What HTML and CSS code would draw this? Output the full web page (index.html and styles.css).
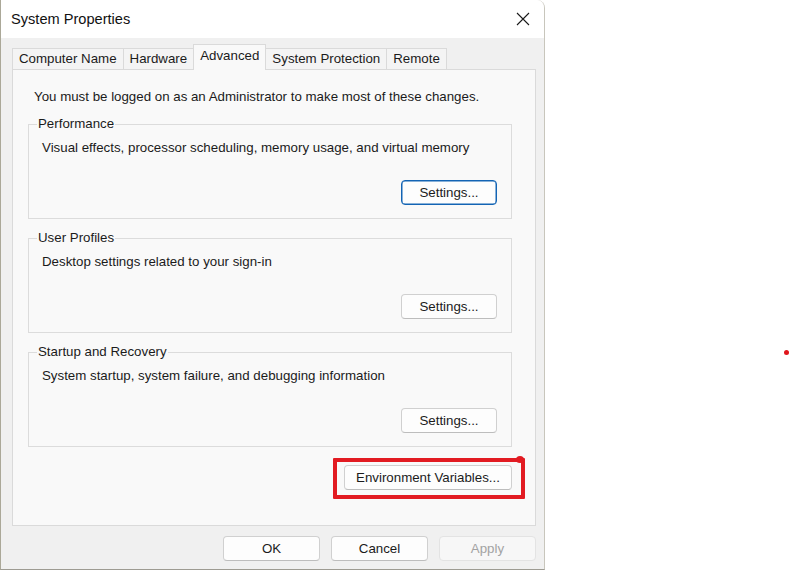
FILE: index.html
```html
<!DOCTYPE html>
<html>
<head>
<meta charset="utf-8">
<title>System Properties</title>
<link rel="stylesheet" href="styles.css">
</head>
<body>
<div class="window">
  <div class="titlebar">
    <span class="title">System Properties</span>
    <span class="close" aria-label="Close">
      <svg width="14" height="14" viewBox="0 0 14 14"><path d="M1 1 L13 13 M13 1 L1 13" stroke="#1a1a1a" stroke-width="1.1" fill="none"/></svg>
    </span>
  </div>
  <div class="body">
    <div class="tabs">
      <div class="tab">Computer Name</div>
      <div class="tab">Hardware</div>
      <div class="tab active">Advanced</div>
      <div class="tab">System Protection</div>
      <div class="tab">Remote</div>
    </div>
    <div class="panel">
      <p class="notice">You must be logged on as an Administrator to make most of these changes.</p>
      <fieldset class="group">
        <legend>Performance</legend>
        <p class="desc">Visual effects, processor scheduling, memory usage, and virtual memory</p>
        <div class="btnrow"><button class="btn focus">Settings...</button></div>
      </fieldset>
      <fieldset class="group">
        <legend>User Profiles</legend>
        <p class="desc">Desktop settings related to your sign-in</p>
        <div class="btnrow"><button class="btn">Settings...</button></div>
      </fieldset>
      <fieldset class="group">
        <legend>Startup and Recovery</legend>
        <p class="desc">System startup, system failure, and debugging information</p>
        <div class="btnrow"><button class="btn">Settings...</button></div>
      </fieldset>
      <div class="envrow">
        <div class="envwrap">
          <button class="btn env">Environment Variables...</button>
          <span class="highlight"></span>
          <span class="blob"></span>
        </div>
      </div>
    </div>
    <div class="footer">
      <button class="btn wide">OK</button>
      <button class="btn wide">Cancel</button>
      <button class="btn wide disabled">Apply</button>
    </div>
  </div>
</div>
<span class="dot"></span>
</body>
</html>
```
FILE: styles.css
```css
html, body {
  margin: 0;
  padding: 0;
  background: #ffffff;
  width: 789px;
  height: 572px;
  overflow: hidden;
  position: relative;
  font-family: "Liberation Sans", Arial, sans-serif;
  color: #1b1b1b;
}

.window {
  width: 545px;
  height: 570px;
  border-left: 1px solid #aba898;
  border-right: 1px solid #c8c6bc;
  border-bottom: 1px solid #9d9b92;
  border-top-right-radius: 8px;
  background: #f0f0f0;
  display: flex;
  flex-direction: column;
  overflow: hidden;
  box-sizing: border-box;
}

.titlebar {
  height: 38px;
  background: #ffffff;
  display: flex;
  align-items: center;
  justify-content: space-between;
  padding: 0 14px 0 10px;
  flex: none;
}

.title {
  font-size: 14.6px;
  color: #111;
}

.close {
  display: flex;
  width: 14px;
  height: 14px;
}

.body {
  flex: 1;
  display: flex;
  flex-direction: column;
  padding: 7px 0 0 11px;
}

.tabs {
  display: flex;
  align-items: flex-end;
  height: 24px;
  position: relative;
  z-index: 1;
}

.tab {
  height: 20px;
  line-height: 20px;
  padding: 0 6px;
  font-size: 13.3px;
  background: #f4f4f4;
  border: 1px solid #dadada;
  border-bottom: none;
  margin-right: -1px;
  color: #1b1b1b;
}

.tab.active {
  height: 25px;
  line-height: 22px;
  background: #f9f9f9;
  margin-bottom: -1px;
  padding: 0 6px;
  position: relative;
  z-index: 2;
}

.panel {
  border: 1px solid #dadada;
  background: #f9f9f9;
  padding: 0 23px 0 15px;
  box-sizing: border-box;
  display: flex;
  flex-direction: column;
  width: 524px;
  height: 457px;
}

.notice {
  margin: 19px 0 12px 6px;
  font-size: 13.3px;
  line-height: 15px;
}

.group {
  margin: 0 0 11px 0;
  padding: 8px 14px 13px 13px;
  border: 1px solid #dcdcdc;
  min-width: 0;
}

.group legend {
  font-size: 13.3px;
  line-height: 16px;
  padding: 0 1px;
  margin-left: -5px;
}

.desc {
  margin: 0 0 25px 0;
  font-size: 13.3px;
  line-height: 15px;
}

.btnrow {
  display: flex;
  justify-content: flex-end;
}

.btn {
  font-family: "Liberation Sans", Arial, sans-serif;
  font-size: 13.3px;
  color: #1b1b1b;
  background: #fdfdfd;
  border: 1px solid #d0d0d0;
  border-bottom-color: #bdbdbd;
  border-radius: 4px;
  height: 25px;
  width: 96px;
  padding: 0;
  box-sizing: border-box;
}

.btn.focus {
  border: 1px solid #1364b4;
  box-shadow: inset 0 0 0 0.5px #1364b4;
}

.envrow {
  display: flex;
  justify-content: flex-end;
  margin-top: 7px;
}

.envwrap {
  position: relative;
}

.btn.env {
  width: 168px;
}

.highlight {
  position: absolute;
  left: -11px;
  top: -7px;
  right: -13px;
  bottom: -9px;
  border: 4px solid #e21b22;
  border-radius: 1px;
  pointer-events: none;
}

.blob {
  position: absolute;
  right: -12px;
  top: -9px;
  width: 8px;
  height: 7px;
  background: #e21b22;
  border-radius: 50%;
}

.footer {
  display: flex;
  justify-content: flex-end;
  gap: 11px;
  margin-top: 10px;
  width: 524px;
}

.btn.wide {
  width: 97px;
}

.btn.disabled {
  color: #a3a3a3;
  background: #f7f7f7;
  border-color: #e3e3e3;
}

.dot {
  position: absolute;
  left: 784px;
  top: 350px;
  width: 5px;
  height: 5px;
  border-radius: 50%;
  background: #e0161c;
}
```
